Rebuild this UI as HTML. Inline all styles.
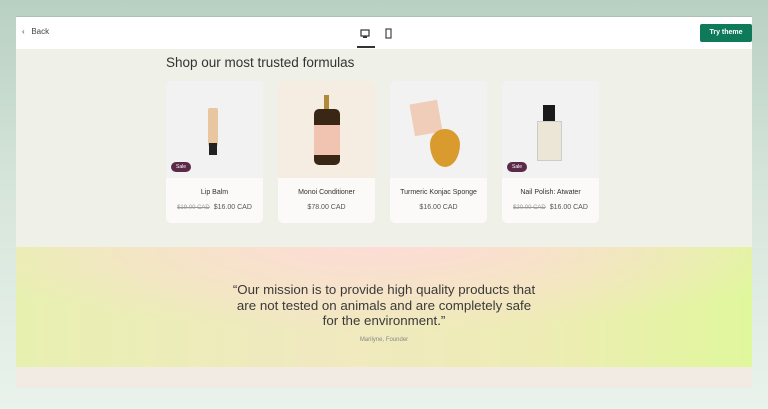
<!DOCTYPE html>
<html><head><meta charset="utf-8"><style>
*{margin:0;padding:0;box-sizing:border-box}
body{width:768px;height:409px;overflow:hidden;background:linear-gradient(180deg,#b8d0c2 0%,#d6e5da 45%,#e9f3ec 100%);font-family:"Liberation Sans",sans-serif;position:relative}
.frame{position:absolute;left:16px;top:16px;width:736px;height:372px;background:#eff0e8;border-top:1px solid #aebfb4;border-bottom:1px solid #dcdcd4}
.hdr{position:absolute;left:0;top:0;width:736px;height:32px;background:#fff}
.back{position:absolute;left:6px;top:10px;font-size:8px;color:#444}
.btn{position:absolute;right:0;top:7px;width:52px;height:18px;background:#0e7a5a;color:#fff;font-size:7px;font-weight:bold;text-align:center;line-height:18px;border-radius:2px}
h2{position:absolute;left:150px;top:38px;font-size:13.5px;font-weight:normal;color:#333}
.card{position:absolute;top:64px;width:97px;height:142px;background:#fbfaf8;border-radius:5px;overflow:hidden}
.img{height:97px;background:#f2f2f2;position:relative}
.name{text-align:center;font-size:7px;color:#333;margin-top:11px}
.price{text-align:center;font-size:7px;color:#555;margin-top:8px}
.price s{color:#999;font-size:6px;margin-right:4px}
.sale{position:absolute;left:5px;bottom:6px;background:#5b2a48;color:#fff;font-size:5px;border-radius:6px;padding:2px 5px}
.band{position:absolute;left:0;top:230px;width:736px;height:120px;background:radial-gradient(ellipse 60% 70% at 50% 0%,#fddcd6 0%,rgba(253,220,214,0) 100%),linear-gradient(90deg,#e8f0b0,#f0e9c0 40%,#eeecb5 70%,#e0f79c);}
.q{position:absolute;left:0;width:736px;top:35px;text-align:center;font-size:13.3px;line-height:15.5px;color:#3a3a3a}
.a{position:absolute;left:0;width:736px;top:90px;text-align:center;font-size:6px;color:#888}
.strip{position:absolute;left:0;top:350px;width:736px;height:21px;background:#f2ebe3}
</style></head><body>
<div class="frame">
<div class="hdr">
<div class="back">&#x2039;&nbsp;&nbsp; Back</div>
<svg style="position:absolute;left:344px;top:12px" width="10" height="10"><rect x="1" y="1" width="8" height="6" fill="none" stroke="#333" stroke-width="1.2"/><rect x="3" y="7" width="4" height="2" fill="#333"/></svg>
<div style="position:absolute;left:341px;top:29px;width:18px;height:2px;background:#333"></div>
<svg style="position:absolute;left:369px;top:11px" width="8" height="11"><rect x="1" y="1" width="5" height="9" fill="none" stroke="#333" stroke-width="1.1"/></svg>
<div class="btn">Try theme</div>
</div>
<h2>Shop our most trusted formulas</h2>
<div class="card" style="left:150px"><div class="img"><div style="position:absolute;left:42px;top:27px;width:10px;height:38px;background:#e8c6a0;border-radius:2px"></div><div style="position:absolute;left:43px;top:62px;width:8px;height:12px;background:#222"></div><div class="sale">Sale</div></div><div class="name">Lip Balm</div><div class="price"><s>$19.00 CAD</s>$16.00 CAD</div></div>
<div class="card" style="left:262px"><div class="img" style="background:#f5ede2"><div style="position:absolute;left:36px;top:28px;width:26px;height:56px;background:#3a2614;border-radius:5px"></div><div style="position:absolute;left:36px;top:44px;width:26px;height:30px;background:#f0c4b0"></div><div style="position:absolute;left:46px;top:14px;width:5px;height:14px;background:#b08a3a"></div></div><div class="name">Monoi Conditioner</div><div class="price">$78.00 CAD</div></div>
<div class="card" style="left:374px"><div class="img"><div style="position:absolute;left:22px;top:21px;width:28px;height:32px;background:#f0cdb8;transform:rotate(-10deg)"></div><div style="position:absolute;left:40px;top:48px;width:30px;height:38px;background:#d99a2e;border-radius:50% 50% 50% 50%/40% 40% 60% 60%"></div></div><div class="name">Turmeric Konjac Sponge</div><div class="price">$16.00 CAD</div></div>
<div class="card" style="left:486px"><div class="img"><div style="position:absolute;left:41px;top:24px;width:12px;height:16px;background:#1a1a1a"></div><div style="position:absolute;left:35px;top:40px;width:25px;height:40px;background:#ece6d6;border:1px solid #ccc"></div><div class="sale">Sale</div></div><div class="name">Nail Polish: Atwater</div><div class="price"><s>$20.00 CAD</s>$16.00 CAD</div></div>
<div class="band"><div class="q">“Our mission is to provide high quality products that<br>are not tested on animals and are completely safe<br>for the environment.”</div><div class="a">Marilyne, Founder</div></div>
<div class="strip"></div>
</div>
</body></html>
